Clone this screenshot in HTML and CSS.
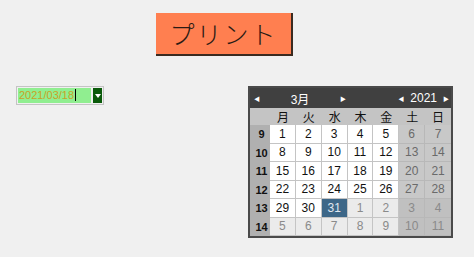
FILE: index.html
```html
<!DOCTYPE html>
<html lang="ja">
<head>
    <meta charset="UTF-8">
    <title>プリント</title>
    <link rel="stylesheet" href="styles.css">
</head>
<body>
    <div class="top">
        <button class="print-btn">プリント</button>
    </div>

    <div class="main">
        <div class="datebox">
            <div class="date-field">2021/03/18<span class="caret"></span></div>
            <div class="drop-btn"><span class="tri"></span></div>
        </div>

        <div class="calendar">
            <div class="cal-head">
                <div class="nav-month">
                    <span class="arrow">&#9664;</span>
                    <span class="label">3月</span>
                    <span class="arrow">&#9654;</span>
                </div>
                <div class="nav-year">
                    <span class="arrow">&#9664;</span>
                    <span class="label">2021</span>
                    <span class="arrow">&#9654;</span>
                </div>
            </div>
            <div class="cal-grid" id="grid">
                <div class="wd blank"></div>
                <div class="wd">月</div>
                <div class="wd">火</div>
                <div class="wd">水</div>
                <div class="wd">木</div>
                <div class="wd">金</div>
                <div class="wd">土</div>
                <div class="wd">日</div>
            </div>
        </div>
    </div>

    <script>
        const grid = document.getElementById('grid');
        const weeks = [9, 10, 11, 12, 13, 14];
        let day = 1;

        weeks.forEach((wk, r) => {
            const w = document.createElement('div');
            w.className = 'wk';
            w.textContent = wk;
            grid.appendChild(w);

            for (let c = 0; c < 7; c++) {
                const cell = document.createElement('div');
                let n = day;
                let other = false;
                if (day > 31) {
                    n = day - 31;
                    other = true;
                }
                cell.className = 'day';
                if (c >= 5) cell.classList.add('weekend');
                if (other) cell.classList.add('other');
                if (day === 31) cell.classList.add('selected');
                if (c === 6) cell.classList.add('last');
                cell.textContent = n;
                grid.appendChild(cell);
                day++;
            }
        });
    </script>
</body>
</html>
```

FILE: styles.css
```css
body {
    margin: 0;
    background-color: #f0f0f0;
    font-family: "Liberation Sans", "Noto Sans CJK JP", sans-serif;
}
.top {
    padding: 13px 0 0 156px;
    height: 43px;
}
.print-btn {
    width: 137px;
    height: 43px;
    margin: 0;
    padding: 0 0 2px 0;
    background-color: #ff7f50;
    border: none;
    border-right: 2px solid #3a2a20;
    border-bottom: 2px solid #3a2a20;
    font-family: "Noto Sans CJK JP", serif;
    font-weight: 300;
    font-size: 25px;
    letter-spacing: 2px;
    color: #2a1a14;
}
.main {
    display: flex;
    align-items: flex-start;
    margin-top: 30px;
}
.datebox {
    display: flex;
    margin-left: 16px;
    padding: 1px;
    border: 1px solid #c4c4c4;
    height: 15px;
}
.date-field {
    width: 72px;
    background-color: #90ee90;
    color: #c9a227;
    font-size: 11px;
    line-height: 15px;
    padding-left: 1px;
}
.caret {
    display: inline-block;
    width: 1px;
    height: 12px;
    margin-left: 1px;
    vertical-align: -2px;
    background-color: #000;
}
.drop-btn {
    width: 9px;
    margin-left: 2px;
    background-color: #0a5a0a;
    display: flex;
    align-items: center;
    justify-content: center;
}
.tri {
    width: 0;
    height: 0;
    border-left: 3px solid transparent;
    border-right: 3px solid transparent;
    border-top: 4px solid #fff;
}
.calendar {
    margin-left: 144px;
    width: 201px;
    border: 2px solid #4a4a4a;
    background-color: #fff;
}
.cal-head {
    display: flex;
    justify-content: space-between;
    align-items: center;
    height: 20px;
    background-color: #404040;
    color: #fff;
    font-size: 12px;
}
.nav-month {
    display: flex;
    align-items: center;
    justify-content: space-between;
    width: 92px;
    padding-left: 4px;
}
.nav-year {
    display: flex;
    align-items: center;
    gap: 6px;
    padding-right: 2px;
}
.arrow {
    font-size: 6px;
}
.cal-grid {
    display: grid;
    grid-template-columns: 20px repeat(7, 1fr);
    grid-template-rows: 17px repeat(6, 18.5px);
    font-size: 12px;
}
.wd {
    display: flex;
    align-items: center;
    justify-content: center;
    background-color: #c4c4c4;
    color: #111;
    font-size: 12px;
}
.wk {
    display: flex;
    align-items: center;
    justify-content: center;
    background-color: #b0b0b0;
    color: #111;
    font-weight: bold;
    font-size: 11px;
    padding-left: 3px;
}
.day {
    display: flex;
    align-items: center;
    justify-content: center;
    box-sizing: border-box;
    border-right: 1px solid #c4c4c4;
    border-bottom: 1px solid #c4c4c4;
    background-color: #fff;
    color: #111;
}
.day.last {
    border-right: none;
}
.day.weekend {
    background-color: #c8c8c8;
    color: #6a6a6a;
    border-color: #b8b8b8;
}
.day.other {
    background-color: #ebebeb;
    color: #8a8a8a;
}
.day.other.weekend {
    background-color: #c0c0c0;
    color: #8a8a8a;
}
.day.selected {
    background-color: #3d6788;
    color: #e0e8f0;
}
```
